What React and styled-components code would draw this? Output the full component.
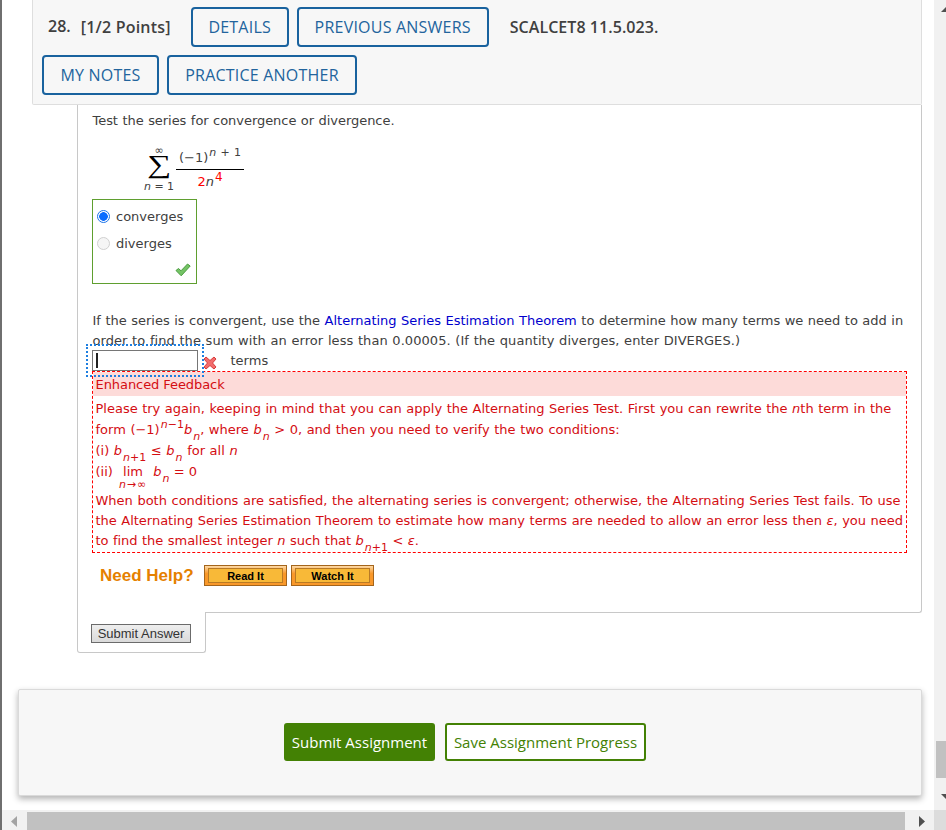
import styled, { createGlobalStyle } from "styled-components";

export default function App() {
  return (
    <Window>
      <GlobalStyle />
      <Edge />
      <Page>
        <Header>
          <Row>
            <Number>28.</Number>
            <Points>[1/2 Points]</Points>
            <TabButton $width={98}>DETAILS</TabButton>
            <TabButton $width={192}>PREVIOUS ANSWERS</TabButton>
            <Source>SCALCET8 11.5.023.</Source>
          </Row>
          <Row>
            <TabButton $width={117}>MY NOTES</TabButton>
            <TabButton $width={190}>PRACTICE ANOTHER</TabButton>
          </Row>
        </Header>
        <Question>
          <Line $spacing={-0.05}>Test the series for convergence or divergence.</Line>
          <Series>
            <Sum>
              <Limit>∞</Limit>
              <Sigma>∑</Sigma>
              <Limit>
                <i>n</i> = 1
              </Limit>
            </Sum>
            <Fraction>
              <Numerator>
                (−1)
                <Sup>
                  <i>n</i> + 1
                </Sup>
              </Numerator>
              <Denominator>
                2<i>n</i>
                <Sup>4</Sup>
              </Denominator>
            </Fraction>
          </Series>
          <Choices>
            <Choice>
              <Radio $checked /> converges
            </Choice>
            <Choice>
              <Radio /> diverges
            </Choice>
            <Tick />
          </Choices>
          <Line $spacing={-0.02}>
            If the series is convergent, use the <Term>Alternating Series Estimation Theorem</Term> to
            determine how many terms we need to add in
          </Line>
          <Line $spacing={0.06}>
            order to find the sum with an error less than 0.00005. (If the quantity diverges, enter
            DIVERGES.)
          </Line>
          <AnswerRow>
            <Answer>
              <Caret />
            </Answer>
            <Cross />
            <Line $height={22}>terms</Line>
          </AnswerRow>
          <Feedback>
            <FeedbackTitle>Enhanced Feedback</FeedbackTitle>
            <Line $spacing={-0.01}>
              Please try again, keeping in mind that you can apply the Alternating Series Test. First
              you can rewrite the <i>n</i>th term in the
            </Line>
            <Line $height={21}>
              form (−1)
              <Sup>
                <i>n</i>−1
              </Sup>
              <i>b</i>
              <Sub>
                <i>n</i>
              </Sub>
              , where <i>b</i>
              <Sub>
                <i>n</i>
              </Sub>{" "}
              &gt; 0, and then you need to verify the two conditions:
            </Line>
            <Line $height={21}>
              (i) <i>b</i>
              <Sub>
                <i>n</i>+1
              </Sub>{" "}
              ≤ <i>b</i>
              <Sub>
                <i>n</i>
              </Sub>{" "}
              for all <i>n</i>
            </Line>
            <LimitLine>
              <span>(ii)</span>
              <Lim>
                <span>lim</span>
                <small>
                  <i>n</i>→∞
                </small>
              </Lim>
              <span>
                <i>b</i>
                <Sub>
                  <i>n</i>
                </Sub>{" "}
                = 0
              </span>
            </LimitLine>
            <Line>
              When both conditions are satisfied, the alternating series is convergent; otherwise, the
              Alternating Series Test fails. To use
            </Line>
            <Line $spacing={-0.02}>
              the Alternating Series Estimation Theorem to estimate how many terms are needed to allow
              an error less then <i>ε</i>, you need
            </Line>
            <Line $spacing={-0.04}>
              to find the smallest integer <i>n</i> such that <i>b</i>
              <Sub>
                <i>n</i>+1
              </Sub>{" "}
              &lt; <i>ε</i>.
            </Line>
          </Feedback>
          <Help>
            <HelpTitle>Need Help?</HelpTitle>
            <HelpButton>
              <span>Read It</span>
            </HelpButton>
            <HelpButton>
              <span>Watch It</span>
            </HelpButton>
          </Help>
        </Question>
        <SubmitTab>
          <SubmitAnswer>Submit Answer</SubmitAnswer>
        </SubmitTab>
        <Footer>
          <Submit>Submit Assignment</Submit>
          <Save>Save Assignment Progress</Save>
        </Footer>
      </Page>
      <VerticalBar>
        <Arrow width="5" height="5" viewBox="0 0 5 5">
          <path d="M0 5 5 0V5Z" />
        </Arrow>
        <VerticalThumb />
        <Arrow width="5" height="5" viewBox="0 0 5 5">
          <path d="M0 0H5V5Z" />
        </Arrow>
      </VerticalBar>
      <HorizontalBar>
        <Arrow $muted width="6" height="11" viewBox="0 0 6 11">
          <path d="M6 0V11L0 5.5Z" />
        </Arrow>
        <HorizontalThumb />
        <Arrow width="6" height="11" viewBox="0 0 6 11">
          <path d="M0 0V11L6 5.5Z" />
        </Arrow>
      </HorizontalBar>
      <Corner />
    </Window>
  );
}

const GlobalStyle = createGlobalStyle`
  * {
    box-sizing: border-box;
  }
  body {
    margin: 0;
    background: #fff;
  }
`;

const Window = styled.div`
  display: grid;
  grid-template-columns: 2px 932px 12px;
  grid-template-rows: 810px 20px;
  width: 946px;
  height: 830px;
  overflow: hidden;
  font: 13px "DejaVu Sans", sans-serif;
  color: #404040;
`;

const Edge = styled.div`
  grid-row: 1 / 3;
  background: #6f6f6f;
`;

const Page = styled.main`
  display: flex;
  flex-direction: column;
`;

const VerticalBar = styled.div`
  display: flex;
  flex-direction: column;
  align-items: flex-end;
  padding: 7px 0 11px;
  background: #f1f1f1;
`;

const VerticalThumb = styled.div`
  width: 10px;
  height: 37px;
  margin: 729px 0 16px;
  background: #c1c1c1;
`;

const HorizontalBar = styled.div`
  display: flex;
  align-items: center;
  grid-column: 2;
  padding: 2px 9px 0;
  background: #f1f1f1;
`;

const HorizontalThumb = styled.div`
  width: 878px;
  height: 18px;
  margin: 0 14px 0 10px;
  background: #c1c1c1;
`;

const Corner = styled.div`
  background: #dcdcdc;
`;

const Arrow = styled.svg`
  flex: none;
  fill: ${({ $muted }) => ($muted ? "#a3a3a3" : "#505050")};
`;

const Header = styled.header`
  display: flex;
  flex-direction: column;
  gap: 8px;
  width: 890px;
  height: 105px;
  margin-left: 30px;
  padding: 7px 9px 0;
  background: #f7f7f7;
  border: 1px solid #dedede;
  border-top: 0;
  border-radius: 0 0 2px 2px;
  font: 600 16px "Open Sans", sans-serif;
`;

const Row = styled.div`
  display: flex;
  align-items: center;
  gap: 8px;
`;

const Number = styled.span`
  margin: -2px 2px 0 6px;
`;

const Points = styled.span`
  width: 102px;
  letter-spacing: 0.2px;
`;

const Source = styled.span`
  margin-left: 13px;
  letter-spacing: 0.06px;
`;

const TabButton = styled.button`
  width: ${({ $width }) => $width}px;
  height: 40px;
  padding: 0;
  background: transparent;
  border: 2px solid #19629e;
  border-radius: 4px;
  color: #22649d;
  font: 16px "Open Sans", sans-serif;
  letter-spacing: 0.22px;
`;

const Question = styled.section`
  display: flex;
  flex-direction: column;
  width: 845px;
  height: 508px;
  margin-left: 75px;
  padding: 6px 14px 0;
  border: 1px solid #c8c8c8;
  border-top: 0;
  border-radius: 0 0 3px 0;
`;

const Line = styled.div`
  height: ${({ $height = 20 }) => $height}px;
  padding-left: 0.5px;
  line-height: ${({ $height = 20 }) => $height}px;
  letter-spacing: ${({ $spacing = 0 }) => $spacing}px;
  word-spacing: 0.44px;
  white-space: nowrap;
`;

const Series = styled.div`
  display: flex;
  height: 68px;
  padding: 17px 0 0 52px;
`;

const Sum = styled.div`
  display: flex;
  flex-direction: column;
  align-items: center;
  width: 30px;
  margin-top: -2px;
`;

const Limit = styled.span`
  height: 9px;
  font-size: 11px;
  line-height: 9px;
  white-space: nowrap;
`;

const Sigma = styled.span`
  height: 27px;
  font: 26px "Liberation Serif", serif;
  line-height: 19px;
  color: #000;
  transform: scaleX(1.3);
`;

const Fraction = styled.div`
  display: flex;
  flex-direction: column;
  align-items: center;
  width: 68px;
  margin-left: 2px;
`;

const Numerator = styled.div`
  width: 100%;
  height: 22px;
  padding-left: 3px;
  border-bottom: 1px solid #000;
  line-height: 20px;
  white-space: nowrap;
  word-spacing: 0.8px;
`;

const Sup = styled.span`
  margin-left: 1px;
  font-size: 11px;
  line-height: 0;
  vertical-align: 6px;
`;

const Sub = styled.span`
  margin-left: 1px;
  font-size: 11px;
  line-height: 0;
  vertical-align: -6px;
`;

const Denominator = styled.div`
  line-height: 24px;
  color: #f00;
  i {
    color: #404040;
  }
  ${Sup} {
    font-size: 12px;
    vertical-align: 5px;
  }
`;

const Choices = styled.div`
  display: flex;
  flex-direction: column;
  width: 105px;
  height: 85px;
  margin-bottom: 27px;
  padding: 3px 4px;
  border: 1px solid #5f9f2f;
`;

const Choice = styled.label`
  display: flex;
  align-items: center;
  gap: 6px;
  height: 27px;
`;

const Radio = styled.span`
  width: 13px;
  height: 13px;
  border: 1px solid ${({ $checked }) => ($checked ? "#1a73e8" : "#d0d0d0")};
  border-radius: 50%;
  background: ${({ $checked }) => ($checked ? "radial-gradient(#0a6cff 0 4px, #fff 4.6px)" : "#f5f5f5")};
`;

const Tick = () => (
  <TickIcon width="16" height="14" viewBox="0 0 16 14">
    <path d="M1 7.5 3.5 5.5 6 7.8 12.5 1 15.2 3 6.2 12.8Z" fill="#74c365" stroke="#4a9c3f" />
  </TickIcon>
);

const TickIcon = styled.svg`
  align-self: flex-end;
  margin: 6px 1px 0 0;
`;

const Term = styled.span`
  color: #0000cd;
`;

const AnswerRow = styled.div`
  display: flex;
  height: 21px;
  margin-top: -1px;
`;

const Answer = styled.div`
  position: relative;
  z-index: 1;
  width: 106px;
  height: 21px;
  padding: 2px 3px;
  background: #fff;
  border: 1px solid #767676;
  outline: 2px dotted #1e7fe0;
  outline-offset: 4px;
`;

const Caret = styled.div`
  width: 2px;
  height: 15px;
  background: #222;
`;

const Cross = () => (
  <CrossIcon width="14" height="14" viewBox="0 0 14 14">
    <path
      d="M1 3 3 1 7 4.5 11 1 13 3 9.5 7 13 11 11 13 7 9.5 3 13 1 11 4.5 7Z"
      fill="#f26c6c"
      stroke="#d93a3a"
    />
  </CrossIcon>
);

const CrossIcon = styled.svg`
  margin: 6px 13px 0 5px;
`;

const Feedback = styled.div`
  display: flex;
  flex-direction: column;
  width: 815px;
  height: 182px;
  padding-left: 2px;
  border: 1px dashed #f00;
  color: #d40d12;
`;

const FeedbackTitle = styled.div`
  height: 24px;
  margin: 0 0 3px -2px;
  padding-left: 2.5px;
  background: #fddbd9;
  letter-spacing: -0.07px;
  line-height: 25px;
`;

const LimitLine = styled.div`
  display: flex;
  gap: 6px;
  height: 30px;
  padding-left: 0.5px;
  line-height: 21px;
`;

const Lim = styled.span`
  display: flex;
  flex-direction: column;
  align-items: center;
  small {
    font-size: 11px;
    letter-spacing: 1px;
    line-height: 5px;
  }
`;

const Help = styled.div`
  display: flex;
  align-items: center;
  gap: 4px;
  height: 21px;
  margin: 12px 0 0 8px;
`;

const HelpTitle = styled.span`
  width: 100px;
  color: #e58000;
  font: bold 17px "Liberation Sans", sans-serif;
`;

const HelpButton = styled.button`
  display: flex;
  width: 83px;
  height: 21px;
  padding: 2px 3px;
  background: linear-gradient(#fdd9a5, #f9982a 40%);
  border: 1px solid #a4651c;
  font: bold 11px "Liberation Sans", sans-serif;
  span {
    flex: 1;
    background: #f8b938;
    border: 1px solid #b97a25;
    line-height: 14px;
  }
`;

const SubmitTab = styled.div`
  width: 129px;
  height: 41px;
  margin: -1px 0 0 75px;
  padding: 12px 13px;
  background: #fff;
  border: 1px solid #c8c8c8;
  border-top: 0;
  border-radius: 0 0 3px 3px;
`;

const SubmitAnswer = styled.button`
  width: 100px;
  height: 19px;
  padding: 0;
  background: linear-gradient(#eee, #dadada);
  border: 1px solid #6b6b6b;
  color: #333;
  font: 13px "Liberation Sans", sans-serif;
`;

const Footer = styled.footer`
  display: flex;
  justify-content: center;
  gap: 10px;
  width: 904px;
  height: 107px;
  margin: 36px 0 0 16px;
  padding: 33px 10px 0 0;
  background: #f7f7f7;
  border: 1px solid #dadada;
  border-radius: 2px;
  box-shadow: 0 3px 6px rgba(0, 0, 0, 0.3);
`;

const Submit = styled.button`
  width: 151px;
  height: 38px;
  padding: 0;
  background: #438104;
  border: 2px solid #438104;
  border-radius: 3px;
  color: #fff;
  font: 15px "Open Sans", sans-serif;
`;

const Save = styled(Submit)`
  width: 201px;
  background: #fff;
  color: #438104;
`;
